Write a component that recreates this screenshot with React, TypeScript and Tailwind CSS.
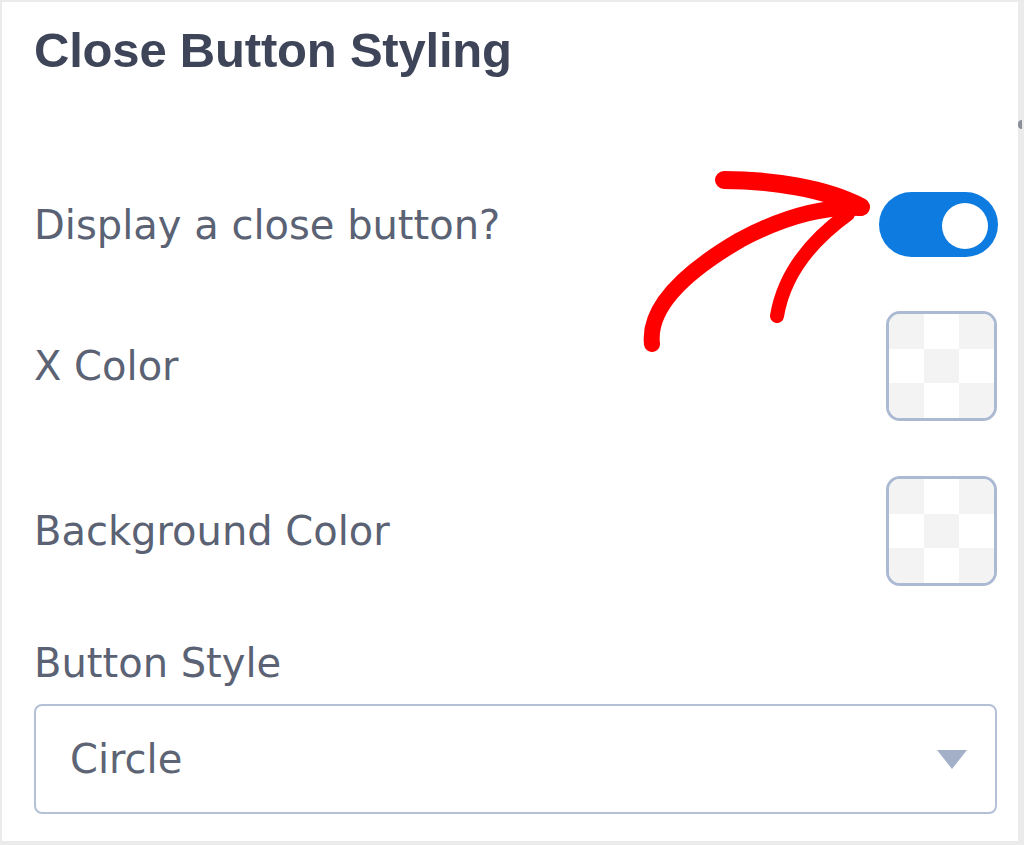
import React from "react";

function Swatch() {
  const cells = [1, 0, 1, 0, 1, 0, 1, 0, 1];
  return (
    <div className="w-[111px] h-[110px] rounded-[14px] border-[3px] border-[#abb9d2] overflow-hidden grid grid-cols-3 grid-rows-3">
      {cells.map((c, i) =>
        c ? (
          <div key={i} className="bg-[#f3f3f3]" />
        ) : (
          <div key={i} className="bg-white" />
        )
      )}
    </div>
  );
}

const label = "text-[40px] leading-none text-[#5a6274] font-['DejaVu_Sans',sans-serif]";

export default function App() {
  return (
    <div className="w-[1024px] h-[845px] bg-[#ebebeb] pt-[2px] pl-[2px] pr-[6px] pb-[4px] relative overflow-hidden font-['Liberation_Sans',Arial,sans-serif]">
      <div className="w-full h-full bg-white pl-[32px] pr-[21px] flex flex-col">
        <div className="h-[94px] flex items-center pt-[3px]">
          <h1 className="text-[49px] leading-none font-bold text-[#3e4558] tracking-[-0.2px]">
            Close Button Styling
          </h1>
        </div>

        <div className="mt-[96px] h-[65px] flex items-center justify-between">
          <span className={label}>Display a close button?</span>
          <div className="w-[119px] h-[65px] rounded-full bg-[#0e7be0] flex items-center justify-end pr-[10px] mr-[-1px]">
            <div className="w-[46px] h-[46px] rounded-full bg-white mt-[2px]" />
          </div>
        </div>

        <div className="mt-[54px] h-[110px] flex items-center justify-between">
          <span className={label}>X Color</span>
          <Swatch />
        </div>

        <div className="mt-[55px] h-[110px] flex items-center justify-between">
          <span className={label}>Background Color</span>
          <Swatch />
        </div>

        <div className="mt-[57px] h-[40px] flex items-center">
          <span className={label}>Button Style</span>
        </div>

        <div className="mt-[21px] h-[110px] rounded-[8px] border-2 border-[#b4c0d6] flex items-center justify-between pl-[34px] pr-[28px]">
          <span className="text-[40px] leading-none text-[#5d6474] font-['DejaVu_Sans',sans-serif]">Circle</span>
          <svg width="30" height="19" viewBox="0 0 30 19">
            <polygon points="0,0 30,0 15,19" fill="#a4b0c8" />
          </svg>
        </div>
      </div>

      <div className="absolute left-[1018px] top-[120px] w-[4px] h-[9px] rounded-l-full bg-[#8a8f99]" />

      <svg
        className="absolute left-[620px] top-[150px]"
        width="260"
        height="220"
        viewBox="0 0 260 220"
        fill="none"
      >
        <path
          d="M 32 194 C 28 160, 60 125, 120 90 C 165 66, 205 56, 240 58"
          stroke="#ff0000"
          strokeWidth="16"
          strokeLinecap="round"
          strokeLinejoin="round"
        />
        <path
          d="M 104 30 C 150 30, 205 38, 241 57"
          stroke="#ff0000"
          strokeWidth="18"
          strokeLinecap="round"
        />
        <path
          d="M 157 166 C 163 130, 185 95, 228 64"
          stroke="#ff0000"
          strokeWidth="14"
          strokeLinecap="round"
        />
      </svg>
    </div>
  );
}
